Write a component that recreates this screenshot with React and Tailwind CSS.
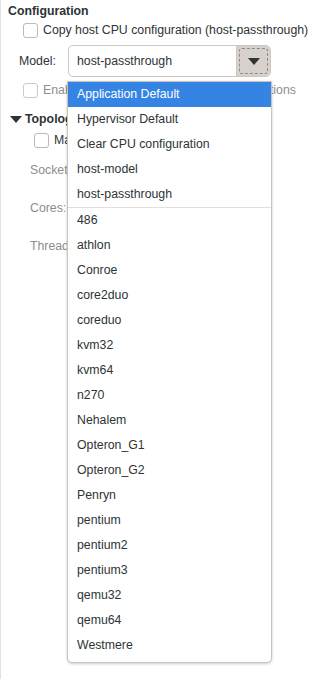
import React from "react";

const items = [
  "Application Default",
  "Hypervisor Default",
  "Clear CPU configuration",
  "host-model",
  "host-passthrough",
  "---",
  "486",
  "athlon",
  "Conroe",
  "core2duo",
  "coreduo",
  "kvm32",
  "kvm64",
  "n270",
  "Nehalem",
  "Opteron_G1",
  "Opteron_G2",
  "Penryn",
  "pentium",
  "pentium2",
  "pentium3",
  "qemu32",
  "qemu64",
  "Westmere",
];

function Check({ disabled }) {
  return (
    <span
      className={`inline-block w-[15px] h-[15px] rounded-[3px] border bg-white shrink-0 ${
        disabled ? "border-[#cfcac5]" : "border-[#bfb8b1]"
      }`}
    />
  );
}

export default function App() {
  return (
    <div
      className="relative w-[334px] h-[679px] bg-white border-l border-[#e4e2df] text-[12.3px] text-[#2e3436] overflow-hidden"
      style={{ fontFamily: '"Liberation Sans", Arial, sans-serif' }}
    >
      <div className="pl-[7px] pt-[3px]">
        <div className="font-bold h-[16px] leading-[16px]">Configuration</div>
        <div className="flex items-center gap-[5px] pl-[15px] mt-[4px] h-[15px]">
          <Check />
          <span className="leading-[15px]">Copy host CPU configuration (host-passthrough)</span>
        </div>
        <div className="flex items-center mt-[7px] h-[32px]">
          <span className="w-[60px] pl-[11px]">Model:</span>
          <div className="flex w-[203px] h-[32px] border border-[#cdc7c2] rounded-[5px] bg-white overflow-hidden">
            <div className="flex-1 flex items-center pl-[8px]">host-passthrough</div>
            <div className="w-[34px] bg-[#d6d1cd] border-l border-[#cdc7c2] p-[2px]">
              <div className="w-full h-full border border-dashed border-[#8e8a86] rounded-[3px] flex items-center justify-center">
                <svg width="12" height="7" viewBox="0 0 12 7">
                  <path d="M0 0 L12 0 L6 7 Z" fill="#2e3436" />
                </svg>
              </div>
            </div>
          </div>
        </div>
        <div className="flex items-center gap-[5px] pl-[15px] mt-[6px] h-[15px] text-[#8b8e8f]">
          <Check disabled />
          <span>Enable available CPU security flaw mitigations</span>
        </div>
        <div className="flex items-center mt-[13px] h-[16px] font-bold">
          <svg width="12" height="7" viewBox="0 0 12 7" className="ml-[2px] mr-[3px]">
            <path d="M0 0 L12 0 L6 7 Z" fill="#2e3436" />
          </svg>
          <span>Topology</span>
        </div>
        <div className="flex items-center gap-[5px] pl-[26px] mt-[6px] h-[15px]">
          <Check />
          <span>Manually set CPU topology</span>
        </div>
        <div className="pl-[22px] text-[#8b8e8f]">
          <div className="h-[38px] flex items-center mt-[3px]">Sockets:</div>
          <div className="h-[38px] flex items-center">Cores:</div>
          <div className="h-[38px] flex items-center">Threads:</div>
        </div>
      </div>

      <div className="absolute left-[66px] top-[81px] w-[205px] bg-white border border-[#c8c4c0] rounded-b-[5px] shadow-[0_1px_3px_rgba(0,0,0,0.2)]">
        {items.map((it, i) =>
          it === "---" ? (
            <div key={i} className="h-[1px] bg-[#e2e0dd]" />
          ) : (
            <div
              key={i}
              className={`h-[25px] flex items-center pl-[9px] ${
                i === 0 ? "bg-[#3584e4] text-white" : "text-[#2e3436]"
              }`}
            >
              {it}
            </div>
          )
        )}
        <div className="h-[4px]" />
      </div>
    </div>
  );
}
